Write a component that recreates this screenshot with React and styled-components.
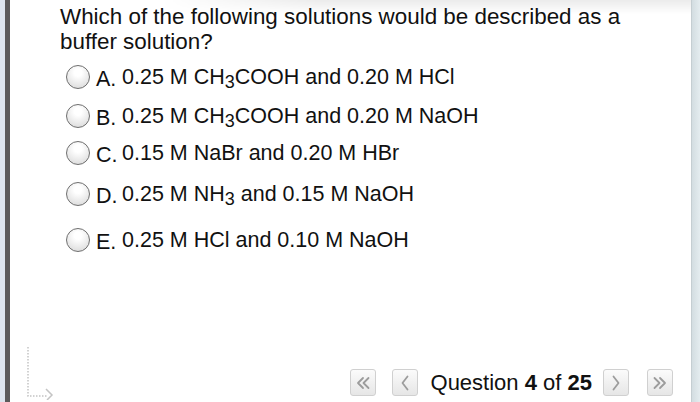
import React from 'react';
import styled, { createGlobalStyle } from 'styled-components';

const Global = createGlobalStyle`
  html, body { margin: 0; padding: 0; background: #fff; }
  body { font-family: "Liberation Sans", Arial, sans-serif; color: #111; }
`;

const Page = styled.div`
  display: flex;
  width: 700px;
  height: 402px;
  overflow: hidden;
`;

const LeftRail = styled.div`
  width: 10px;
  display: flex;
  div:first-child { width: 5px; background: #dce5ee; }
  div:last-child { width: 5px; background: #5b5b5b; }
`;

const RightRail = styled.div`
  width: 8px;
  border-left: 1px solid #c5ced2;
  background: linear-gradient(to right, #d3dde1, #e4ecef);
`;

const Main = styled.main`
  position: relative;
  flex: 1;
  display: flex;
  flex-direction: column;
  &::before {
    content: '';
    position: absolute;
    top: 0;
    left: 150px;
    right: 0;
    height: 14px;
    background: linear-gradient(to bottom, rgba(0,0,0,0.08), rgba(0,0,0,0));
    -webkit-mask-image: linear-gradient(to right, transparent, #000 30%);
    mask-image: linear-gradient(to right, transparent, #000 30%);
  }
`;

const Question = styled.p`
  margin: 0;
  padding: 4px 0 0 50px;
  font-size: 22.4px;
  line-height: 25px;
  width: 580px;
`;

const Options = styled.div`
  display: flex;
  flex-direction: column;
  padding-left: 50px;
`;

const Option = styled.label`
  display: flex;
  align-items: center;
  height: 36px;
  margin-top: ${p => p.$space}px;
  font-size: 21.5px;
`;

const Radio = styled.span`
  width: 24px;
  height: 24px;
  margin-left: 6px;
  margin-right: 6px;
  border-radius: 50%;
  border: 1.5px solid #6f6f6f;
  background: radial-gradient(circle at 50% 30%, #ffffff 20%, #e2e2e2 75%, #cfcfcf);
  box-sizing: border-box;
  flex-shrink: 0;
`;

const Letter = styled.span`
  width: 26px;
  position: relative;
  top: 2px;
`;

const Sub = styled.span`
  font-size: 18px;
  position: relative;
  top: 4px;
`;

const Spacer = styled.div`
  flex: 1;
`;

const Footer = styled.footer`
  display: flex;
  align-items: flex-end;
  justify-content: space-between;
  padding: 0 18px 4px 0;
  height: 56px;
`;

const Nav = styled.nav`
  display: flex;
  align-items: center;
  margin-bottom: 2px;
`;

const NavButton = styled.button`
  width: 26px;
  height: 27px;
  padding: 0;
  margin-left: ${p => p.$ml || 0}px;
  border: 1px solid #d0d0d0;
  border-radius: 3px;
  background: linear-gradient(to bottom, #fbfbfb, #e6e6e6);
  display: flex;
  align-items: center;
  justify-content: center;
  svg { display: block; }
`;

const Counter = styled.span`
  font-size: 22px;
  margin: 0 11px 0 13px;
  b { font-weight: bold; }
`;

const Chevron = ({ dir, double }) => {
  const flip = dir === 'left' ? 'scale(-1,1) translate(-18,0)' : undefined;
  return (
    <svg width="18" height="18" viewBox="0 0 18 18">
      <g transform={flip} fill="none" stroke="#9c9c9c" strokeWidth="1.8" strokeLinecap="round" strokeLinejoin="round">
        {double ? (
          <>
            <path d="M3.5 4 L8.5 9 L3.5 14" />
            <path d="M9 4 L14 9 L9 14" />
          </>
        ) : (
          <path d="M6.5 2.5 L11.5 9 L6.5 15.5" />
        )}
      </g>
    </svg>
  );
};

const CornerArrow = () => (
  <svg width="40" height="56" viewBox="0 0 40 56" style={{ marginLeft: 16, marginBottom: -2 }}>
    <g fill="none" stroke="#c4c4c4" strokeWidth="1.5" strokeDasharray="1.5 1.5">
      <path d="M2 3 V52 H22" />
    </g>
    <path d="M20 45 L26 51 L21 56" fill="none" stroke="#c4c4c4" strokeWidth="1.5" />
  </svg>
);

const options = [
  { letter: 'A.', space: 5, text: <>0.25 M CH<Sub>3</Sub>COOH and 0.20 M HCl</> },
  { letter: 'B.', space: 3, text: <>0.25 M CH<Sub>3</Sub>COOH and 0.20 M NaOH</> },
  { letter: 'C.', space: 1, text: <>0.15 M NaBr and 0.20 M HBr</> },
  { letter: 'D.', space: 5, text: <>0.25 M NH<Sub>3</Sub> and 0.15 M NaOH</> },
  { letter: 'E.', space: 10, text: <>0.25 M HCl and 0.10 M NaOH</> },
];

export default function App() {
  return (
    <>
      <Global />
      <Page>
        <LeftRail><div /><div /></LeftRail>
        <Main>
          <Question>Which of the following solutions would be described as a buffer solution?</Question>
          <Options>
            {options.map(o => (
              <Option key={o.letter} $space={o.space}>
                <Radio />
                <Letter>{o.letter}</Letter>
                <span>{o.text}</span>
              </Option>
            ))}
          </Options>
          <Spacer />
          <Footer>
            <CornerArrow />
            <Nav>
              <NavButton><Chevron dir="left" double /></NavButton>
              <NavButton $ml={16}><Chevron dir="left" /></NavButton>
              <Counter>Question <b>4</b> of <b>25</b></Counter>
              <NavButton><Chevron dir="right" /></NavButton>
              <NavButton $ml={18}><Chevron dir="right" double /></NavButton>
            </Nav>
          </Footer>
        </Main>
        <RightRail />
      </Page>
    </>
  );
}
